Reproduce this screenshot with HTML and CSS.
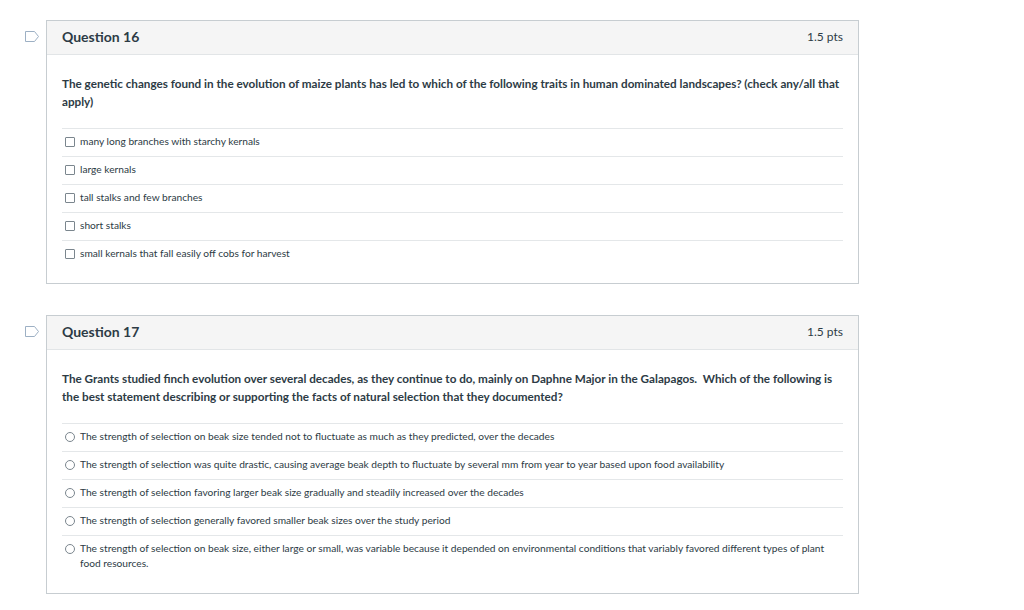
FILE: index.html
```html
<!DOCTYPE html>
<html>
<head>
<meta charset="utf-8">
<link rel="stylesheet" href="styles.css">
</head>
<body>
<div class="page">
  <div class="qrow">
    <div class="gutter">
      <svg class="flag" width="16" height="13" viewBox="0 0 16 13"><path d="M1.5 1.5 H10.5 L14.5 6.5 L10.5 11.5 H1.5 Z" fill="none" stroke="#9db0c4" stroke-width="1"/></svg>
    </div>
    <div class="question">
      <div class="qhead">
        <span class="qname">Question 16</span>
        <span class="pts">1.5 pts</span>
      </div>
      <div class="qbody">
        <div class="qtext">The genetic changes found in the evolution of maize plants has led to which of the following traits in human dominated landscapes? (check any/all that apply)</div>
        <div class="answers">
          <div class="answer"><span class="box"></span><span class="label">many long branches with starchy kernals</span></div>
          <div class="answer"><span class="box"></span><span class="label">large kernals</span></div>
          <div class="answer"><span class="box"></span><span class="label">tall stalks and few branches</span></div>
          <div class="answer"><span class="box"></span><span class="label">short stalks</span></div>
          <div class="answer"><span class="box"></span><span class="label">small kernals that fall easily off cobs for harvest</span></div>
        </div>
      </div>
    </div>
  </div>

  <div class="qrow">
    <div class="gutter">
      <svg class="flag" width="16" height="13" viewBox="0 0 16 13"><path d="M1.5 1.5 H10.5 L14.5 6.5 L10.5 11.5 H1.5 Z" fill="none" stroke="#9db0c4" stroke-width="1"/></svg>
    </div>
    <div class="question">
      <div class="qhead">
        <span class="qname">Question 17</span>
        <span class="pts">1.5 pts</span>
      </div>
      <div class="qbody">
        <div class="qtext">The Grants studied finch evolution over several decades, as they continue to do, mainly on Daphne Major in the Galapagos.&nbsp; Which of the following is the best statement describing or supporting the facts of natural selection that they documented?</div>
        <div class="answers">
          <div class="answer"><span class="radio"></span><span class="label">The strength of selection on beak size tended not to fluctuate as much as they predicted, over the decades</span></div>
          <div class="answer"><span class="radio"></span><span class="label">The strength of selection was quite drastic, causing average beak depth to fluctuate by several mm from year to year based upon food availability</span></div>
          <div class="answer"><span class="radio"></span><span class="label">The strength of selection favoring larger beak size gradually and steadily increased over the decades</span></div>
          <div class="answer"><span class="radio"></span><span class="label">The strength of selection generally favored smaller beak sizes over the study period</span></div>
          <div class="answer"><span class="radio"></span><span class="label">The strength of selection on beak size, either large or small, was variable because it depended on environmental conditions that variably favored different types of plant food resources.</span></div>
        </div>
      </div>
    </div>
  </div>
</div>
</body>
</html>
```

FILE: styles.css
```css
html, body {
  margin: 0;
  padding: 0;
  background: #ffffff;
}
body {
  font-family: Lato, "Open Sans", sans-serif;
  color: #2d3b45;
}
.page {
  padding-top: 20px;
  display: flex;
  flex-direction: column;
  gap: 31px;
}
.qrow {
  display: flex;
  align-items: flex-start;
}
.gutter {
  width: 46px;
  padding-left: 24px;
  padding-top: 10px;
  box-sizing: border-box;
}
.flag {
  display: block;
}
.question {
  width: 813px;
  border: 1px solid #c7cdd1;
  box-sizing: border-box;
}
.qhead {
  display: flex;
  justify-content: space-between;
  align-items: center;
  background: #f5f5f5;
  border-bottom: 1px solid #e2e5e7;
  height: 31px;
  padding: 0 15px 2px 15px;
}
.qname {
  font-size: 14px;
  font-weight: 700;
}
.pts {
  font-size: 12px;
  font-weight: 400;
}
.qbody {
  padding: 19px 15px 15px 15px;
}
.qtext {
  font-size: 11.7px;
  font-weight: 700;
  line-height: 18px;
}
.answers {
  margin-top: 18px;
}
.answer {
  display: flex;
  align-items: flex-start;
  border-top: 1px solid #e4e7e9;
  padding: 5px 0 7px 3px;
  font-size: 10.2px;
  line-height: 15px;
}
.box {
  flex: none;
  width: 8px;
  height: 8px;
  border: 1px solid #7b868e;
  border-radius: 1px;
  margin-top: 3px;
  margin-right: 5px;
  background: #fff;
}
.radio {
  flex: none;
  width: 8px;
  height: 8px;
  border: 1px solid #7b868e;
  border-radius: 50%;
  margin-top: 3px;
  margin-right: 5px;
  background: #fff;
}
.label {
  flex: 1;
  padding-right: 10px;
}
```
